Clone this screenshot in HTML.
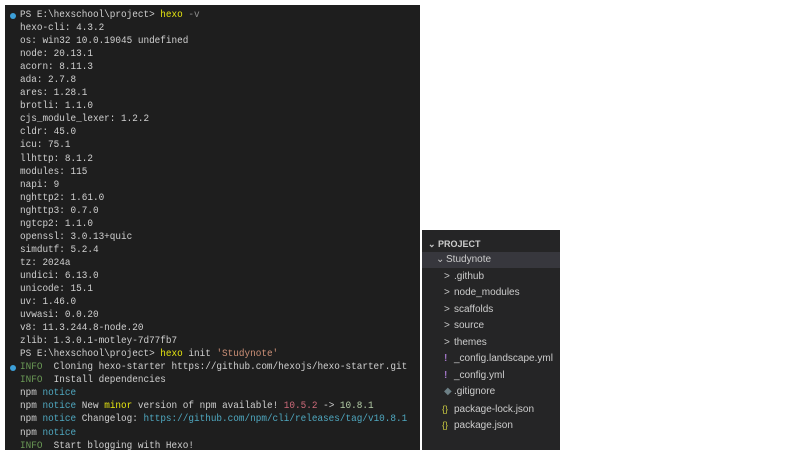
<!DOCTYPE html>
<html><head><style>
body{margin:0;width:800px;height:450px;background:#fff;position:relative;overflow:hidden;font-family:"Liberation Mono",monospace}
#term{position:absolute;left:5px;top:5px;width:415px;height:445px;background:#1e1e1e;overflow:hidden}
#term pre{margin:0;position:absolute;left:15px;top:4px;font-family:"Liberation Mono",monospace;font-size:10.4px;line-height:13.05px;color:#d0d0d0;transform:scaleX(0.9);transform-origin:0 0}
.y{color:#e5e510}.g{color:#6a9955}.c{color:#4fa8c0}.s{color:#ce9178}.r{color:#cd6a7a}.gr{color:#8f8f8f}.gn{color:#b5cea8}
.dot{position:absolute;width:6px;height:6px;border-radius:50%;background:#3c9fd8;left:5px}
#ex{position:absolute;left:422px;top:230px;width:138px;height:220px;background:#252526;font-family:"Liberation Sans",sans-serif;font-size:10px;color:#cccccc}
.row{position:absolute;left:0;width:138px;height:16px;line-height:16px;white-space:nowrap}
.ch{display:inline-block;width:10px;color:#c5c5c5}
</style></head><body>
<div id="term">
<div class="dot" style="top:8px"></div>
<div class="dot" style="top:360px"></div>
<pre>PS E:\hexschool\project&gt; <span class="y">hexo</span> <span class="gr">-v</span>
hexo-cli: 4.3.2
os: win32 10.0.19045 undefined
node: 20.13.1
acorn: 8.11.3
ada: 2.7.8
ares: 1.28.1
brotli: 1.1.0
cjs_module_lexer: 1.2.2
cldr: 45.0
icu: 75.1
llhttp: 8.1.2
modules: 115
napi: 9
nghttp2: 1.61.0
nghttp3: 0.7.0
ngtcp2: 1.1.0
openssl: 3.0.13+quic
simdutf: 5.2.4
tz: 2024a
undici: 6.13.0
unicode: 15.1
uv: 1.46.0
uvwasi: 0.0.20
v8: 11.3.244.8-node.20
zlib: 1.3.0.1-motley-7d77fb7
PS E:\hexschool\project&gt; <span class="y">hexo</span> init <span class="s">'Studynote'</span>
<span class="g">INFO</span>  Cloning hexo-starter https://github.com/hexojs/hexo-starter.git
<span class="g">INFO</span>  Install dependencies
npm <span class="c">notice</span>
npm <span class="c">notice</span> New <span class="y">minor</span> version of npm available! <span class="r">10.5.2</span> -&gt; <span class="gn">10.8.1</span>
npm <span class="c">notice</span> Changelog: <span class="c">https://github.com/npm/cli/releases/tag/v10.8.1</span>
npm <span class="c">notice</span>
<span class="g">INFO</span>  Start blogging with Hexo!</pre>
</div>
<div id="ex">
<div class="row" style="top:6px;font-weight:bold;font-size:9px;left:6px"><span class="ch">&#8964;</span>PROJECT</div>
<div class="row" style="top:22px;background:#37373d;padding-left:14px;width:124px;height:16px"><span class="ch">&#8964;</span>Studynote</div>
<div class="row" style="top:39px;padding-left:22px"><span class="ch">&gt;</span>.github</div>
<div class="row" style="top:55px;padding-left:22px"><span class="ch">&gt;</span>node_modules</div>
<div class="row" style="top:72px;padding-left:22px"><span class="ch">&gt;</span>scaffolds</div>
<div class="row" style="top:88px;padding-left:22px"><span class="ch">&gt;</span>source</div>
<div class="row" style="top:105px;padding-left:22px"><span class="ch">&gt;</span>themes</div>
<div class="row" style="top:121px;padding-left:22px"><span class="ch" style="color:#a074c4;font-weight:bold">!</span>_config.landscape.yml</div>
<div class="row" style="top:138px;padding-left:22px"><span class="ch" style="color:#a074c4;font-weight:bold">!</span>_config.yml</div>
<div class="row" style="top:154px;padding-left:22px"><span class="ch" style="color:#6d8086">&#9670;</span>.gitignore</div>
<div class="row" style="top:171px;padding-left:20px"><span class="ch" style="color:#cbcb41;font-size:9px;width:12px">{}</span>package-lock.json</div>
<div class="row" style="top:187px;padding-left:20px"><span class="ch" style="color:#cbcb41;font-size:9px;width:12px">{}</span>package.json</div>
</div>
</body></html>
